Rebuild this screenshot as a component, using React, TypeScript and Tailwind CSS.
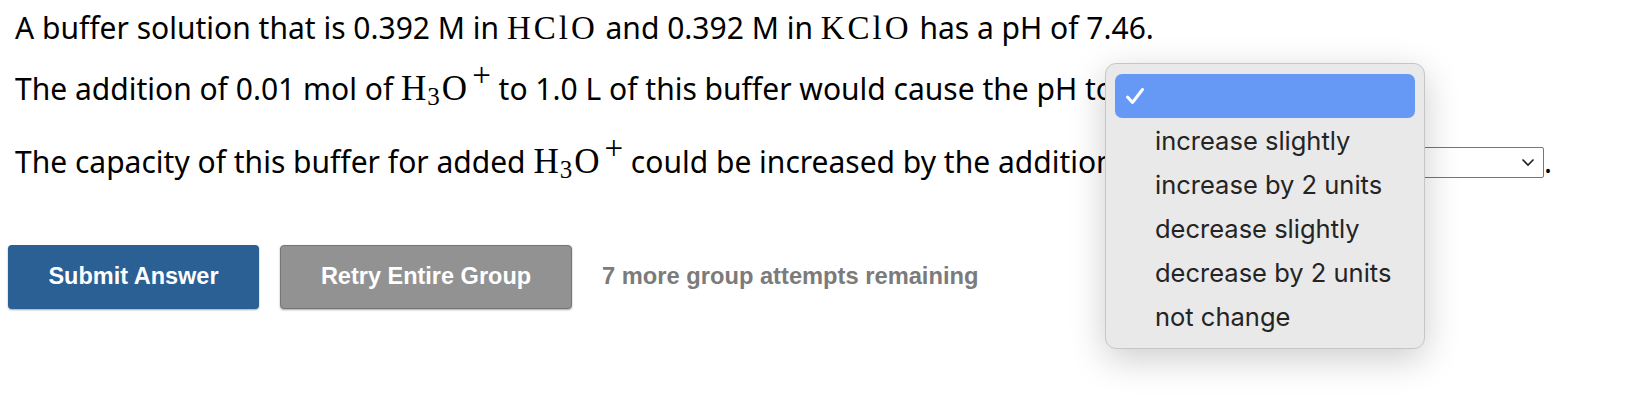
import React from "react";

const serif = { fontFamily: '"Liberation Serif", "DejaVu Serif", serif' };

const M = ({ children }: { children: React.ReactNode }) => (
  <span className="text-[33px] leading-none tracking-[3px]" style={serif}>
    {children}
  </span>
);

const H3O = () => (
  <span className="text-[35px] leading-none" style={serif}>
    H<span className="text-[25px] relative top-[5px] ml-[1px]">3</span>
    <span className="ml-[2px]">O</span>
    <span className="text-[33px] relative top-[-14px] ml-[5px]">+</span>
  </span>
);

const Chevron = () => (
  <svg width="14" height="9" viewBox="0 0 14 9">
    <path d="M1.5 1.5 L7 7 L12.5 1.5" fill="none" stroke="#222" strokeWidth="1.6" />
  </svg>
);

export default function App() {
  return (
    <div
      className="relative w-[1634px] h-[410px] bg-white text-black overflow-hidden"
      style={{ fontFamily: '"Noto Sans", "Open Sans", sans-serif' }}
    >
      <div className="pl-[15px] pt-[10px] text-[30px] leading-[36px]">
        <p className="h-[36px] whitespace-nowrap flex items-center">
          <span>
            A buffer solution that is 0.392 M in <M>HClO</M> and 0.392 M in <M>KClO</M> has a pH of 7.46.
          </span>
        </p>
        <p className="mt-[25px] h-[36px] w-[1400px] whitespace-nowrap flex items-center">
          <span>
            The addition of 0.01 mol of <H3O /> to 1.0 L of this buffer would cause the pH to
          </span>
          <span className="ml-[8px] flex-1 min-w-0 h-[31px] border border-[#767676] rounded-[2px] bg-white" />
        </p>
        <p className="mt-[37px] h-[36px] w-[1537px] whitespace-nowrap flex items-center">
          <span>
            The capacity of this buffer for added <H3O /> could be increased by the addition of
          </span>
          <span className="ml-[8px] flex-1 min-w-0 h-[31px] border border-[#767676] rounded-[2px] bg-white flex items-center justify-end pr-[8px]">
            <Chevron />
          </span>
          <span>.</span>
        </p>
      </div>

      <div
        className="flex items-center pl-[8px] mt-[65px]"
        style={{ fontFamily: '"Liberation Sans", Arial, sans-serif' }}
      >
        <button className="w-[251px] h-[64px] bg-[#2a6094] rounded-[4px] text-white font-bold text-[23.5px] shadow-[0_1px_2px_rgba(0,0,0,0.35)]">
          Submit Answer
        </button>
        <button className="ml-[21px] w-[292px] h-[64px] bg-[#929292] border border-[#767676] rounded-[4px] text-white font-bold text-[23.5px] shadow-[0_1px_2px_rgba(0,0,0,0.35)]">
          Retry Entire Group
        </button>
        <span className="ml-[30px] text-[#7b7b7b] font-bold text-[23.7px]">7 more group attempts remaining</span>
      </div>

      <div
        className="absolute left-[1105px] top-[63px] w-[320px] h-[286px] bg-[#e9e9e9] rounded-[11px] border border-[#c6c6c6] shadow-[0_10px_36px_rgba(0,0,0,0.2)] px-[9px] pt-[10px]"
        style={{ fontFamily: 'Inter, "Liberation Sans", sans-serif' }}
      >
        <div className="h-[44px] rounded-[7px] bg-[#6699f6] flex items-center pl-[10px]">
          <svg width="20" height="18" viewBox="0 0 20 18">
            <path d="M2.5 10 L7.5 15.5 L17.5 2.5" fill="none" stroke="white" strokeWidth="3" strokeLinecap="round" strokeLinejoin="round" />
          </svg>
        </div>
        <div className="pl-[40px] text-[25.5px] text-[#242424] leading-[44px] mt-[1px]">
          <div>increase slightly</div>
          <div>increase by 2 units</div>
          <div>decrease slightly</div>
          <div>decrease by 2 units</div>
          <div>not change</div>
        </div>
      </div>
    </div>
  );
}
